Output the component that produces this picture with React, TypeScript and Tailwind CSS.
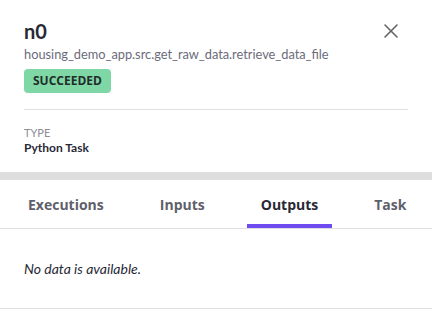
import { X } from 'lucide-react';

const TABS = ['Executions', 'Inputs', 'Outputs', 'Task'];

export default function App() {
  const active = 'Outputs';
  return (
    <div className="h-[336px] w-[432px] overflow-hidden bg-white font-['Lato',sans-serif] text-[#292936]">
      <div className="px-6 pt-[18px]">
        <div className="flex items-start justify-between">
          <div>
            <div className="text-[20px] font-bold leading-[26px]">n0</div>
            <div className="text-[12.8px] leading-[20px] text-[#6b6b7b]">
              housing_demo_app.src.get_raw_data.retrieve_data_file
            </div>
          </div>
          <button className="mt-[1px] mr-[5px] text-[#666]">
            <X className="h-[24px] w-[24px]" strokeWidth={1.6} />
          </button>
        </div>
        <div className="mt-[5px] inline-flex h-6 items-center rounded-[4px] bg-[#80d7a6] px-[9px] font-['Open_Sans',sans-serif] text-[12px] font-bold text-[#1f2e29]">
          SUCCEEDED
        </div>
        <div className="mt-4 border-t border-[#e0e0e0]" />
        <div className="pt-4">
          <div className="text-[11px] leading-[14px] text-[#8c8c96]">TYPE</div>
          <div className="text-[12px] font-bold leading-[16px]">Python Task</div>
        </div>
      </div>
      <div className="mt-4 h-2 bg-[#dedede]" />
      <div className="flex gap-[28px] border-b border-[#e0e0e0] pl-[14px]">
        {TABS.map((t) => (
          <div
            key={t}
            className={`relative flex h-12 items-center px-[14px] font-['Open_Sans',sans-serif] text-[14px] font-bold ${
              t === active ? 'text-[#292936]' : 'text-[#5f5f6b]'
            }`}
          >
            {t}
            {t === active && <div className="absolute bottom-0 left-0 right-0 h-1 bg-[#6f4cf0]" />}
          </div>
        ))}
      </div>
      <div className="flex h-20 items-center border-b border-[#e0e0e0] px-6 text-[14px] italic">
        No data is available.
      </div>
    </div>
  );
}
